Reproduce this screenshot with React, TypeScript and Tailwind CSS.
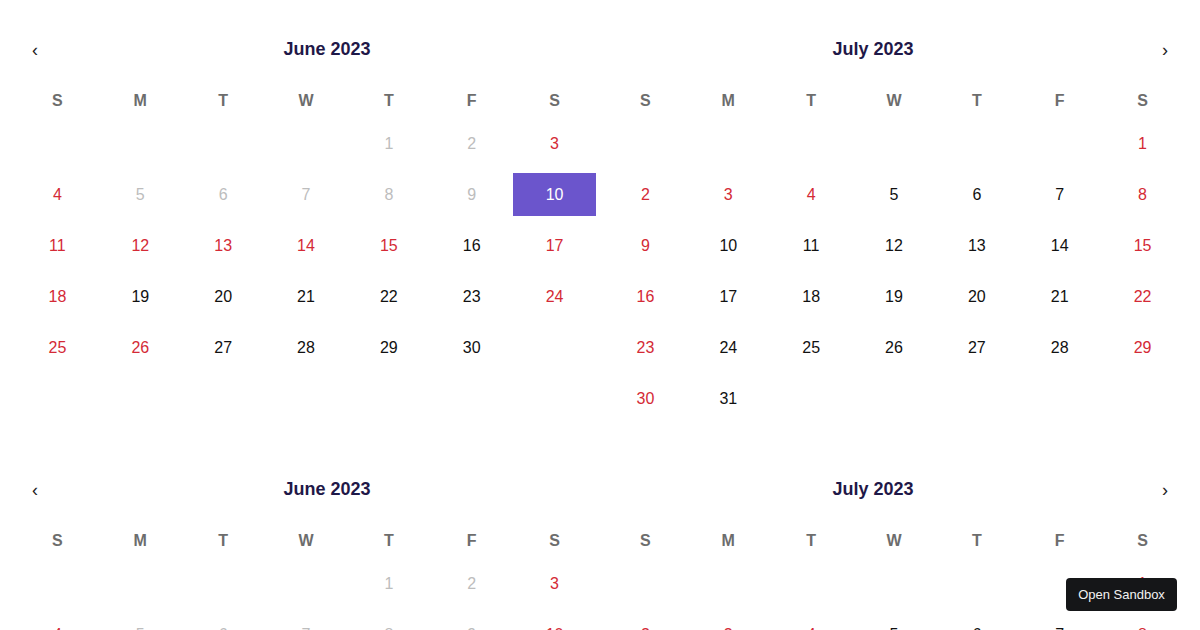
import React from "react";

type Tone = "red" | "black" | "muted" | "selected";

interface MonthSpec {
  title: string;
  offset: number; // weekday index of the 1st
  days: number;
  tone: (d: number, withSelection: boolean) => Tone;
  nav: "prev" | "next";
}

const WEEKDAYS = ["S", "M", "T", "W", "T", "F", "S"];

const juneRed = new Set([3, 4, 10, 11, 12, 13, 14, 15, 17, 18, 24, 25, 26]);
const julyRed = new Set([1, 2, 3, 4, 8, 9, 15, 16, 22, 23, 29, 30]);

const months: MonthSpec[] = [
  {
    title: "June 2023",
    offset: 4,
    days: 30,
    nav: "prev",
    tone: (d, sel) => {
      if (sel && d === 10) return "selected";
      if (juneRed.has(d)) return "red";
      if (d < 10) return "muted";
      return "black";
    },
  },
  {
    title: "July 2023",
    offset: 6,
    days: 31,
    nav: "next",
    tone: (d) => (julyRed.has(d) ? "red" : "black"),
  },
];

const toneClass: Record<Tone, string> = {
  red: "text-[#d42a36]",
  black: "text-[#111111]",
  muted: "text-[#bdbdbd]",
  selected: "bg-[#6b55cc] text-white",
};

function Month({ spec, withSelection }: { spec: MonthSpec; withSelection: boolean }) {
  const cells: (number | null)[] = [];
  for (let i = 0; i < spec.offset; i++) cells.push(null);
  for (let d = 1; d <= spec.days; d++) cells.push(d);

  const navButton =
    spec.nav === "prev" ? (
      <button className="flex w-[42px] items-center justify-center pr-[4px] text-[18px] leading-none text-[#222]">
        ‹
      </button>
    ) : (
      <button className="flex w-[42px] items-center justify-center pl-[4px] text-[18px] leading-none text-[#222]">
        ›
      </button>
    );

  return (
    <div className="flex-1">
      <div className="flex h-[63px] items-center pt-[4px]">
        {spec.nav === "prev" && navButton}
        <div className="flex-1 text-center text-[18px] font-bold text-[#1f1848]">{spec.title}</div>
        {spec.nav === "next" && navButton}
      </div>
      <div className="grid h-[43px] grid-cols-7 items-center">
        {WEEKDAYS.map((w, i) => (
          <div key={i} className="text-center text-[16px] font-bold text-[#6d6d6d]">
            {w}
          </div>
        ))}
      </div>
      <div className="grid grid-cols-7 gap-y-2">
        {cells.map((d, i) => {
          if (d === null) return <div key={i} className="h-[43px]" />;
          const t = spec.tone(d, withSelection);
          return (
            <div
              key={i}
              className={`flex h-[43px] items-center justify-center text-[16px] ${toneClass[t]}`}
            >
              {d}
            </div>
          );
        })}
      </div>
    </div>
  );
}

function CalendarPair({ withSelection }: { withSelection: boolean }) {
  return (
    <div className="flex h-[404px] gap-2">
      {months.map((m) => (
        <Month key={m.title} spec={m} withSelection={withSelection} />
      ))}
    </div>
  );
}

export default function App() {
  return (
    <div
      className="relative h-[630px] w-[1200px] overflow-hidden bg-white"
      style={{ fontFamily: '"Liberation Sans", Arial, sans-serif' }}
    >
      <div className="flex flex-col gap-9 p-4">
        <CalendarPair withSelection />
        <CalendarPair withSelection={false} />
      </div>
      <button className="absolute bottom-[19px] right-[23px] flex h-[33px] w-[111px] items-center justify-center rounded-[4px] bg-[#151618] text-[13px] text-[#f2f2f2]">
        Open Sandbox
      </button>
    </div>
  );
}
